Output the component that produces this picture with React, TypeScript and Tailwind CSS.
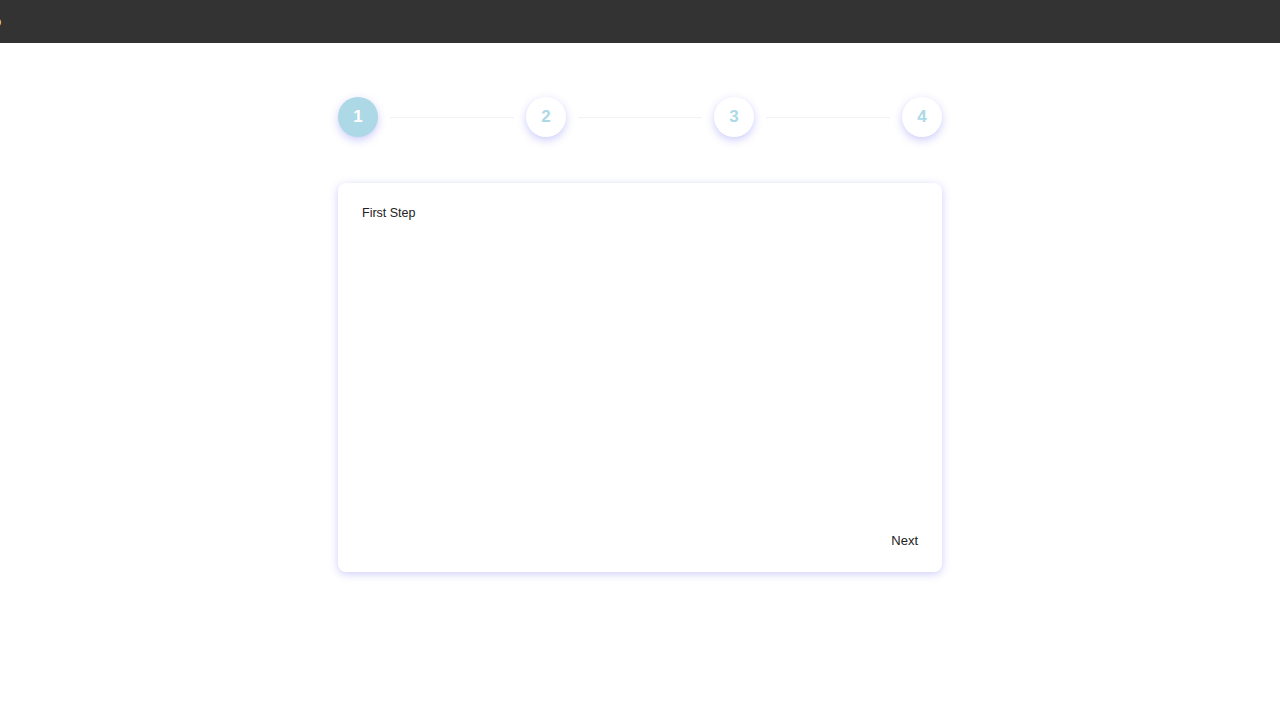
const steps = [1, 2, 3, 4];

export default function App() {
  return (
    <div className="min-h-screen bg-white font-['Liberation_Sans',Arial,sans-serif]">
      <header className="h-[43px] bg-[#333333] flex items-center overflow-hidden">
        <span className="-ml-[6px] text-[13px] text-[#efe9c8] leading-none">o</span>
      </header>

      <main className="w-[604px] mx-auto pt-[54px]">
        <div className="flex items-center">
          {steps.map((n, i) => (
            <div key={n} className={i < steps.length - 1 ? "flex items-center flex-1" : "flex items-center"}>
              <div
                className={
                  n === 1
                    ? "w-10 h-10 rounded-full bg-[#add8e6] text-white font-bold text-[17px] flex items-center justify-center shadow-[0_3px_8px_rgba(110,110,240,0.35)]"
                    : "w-10 h-10 rounded-full bg-white text-[#add8e6] font-bold text-[17px] flex items-center justify-center shadow-[0_3px_8px_rgba(110,110,240,0.35)]"
                }
              >
                {n}
              </div>
              {i < steps.length - 1 && <div className="flex-1 h-px bg-[#f3f3f3] mx-3" />}
            </div>
          ))}
        </div>

        <div className="mt-[46px] h-[389px] rounded-lg bg-white shadow-[0_2px_8px_rgba(110,110,240,0.35)] flex flex-col justify-between px-6 pt-[21px] pb-[22px]">
          <p className="text-[12.5px] text-[#222]">First Step</p>
          <div className="flex justify-end">
            <button className="text-[13px] text-[#222]">Next</button>
          </div>
        </div>
      </main>
    </div>
  );
}
